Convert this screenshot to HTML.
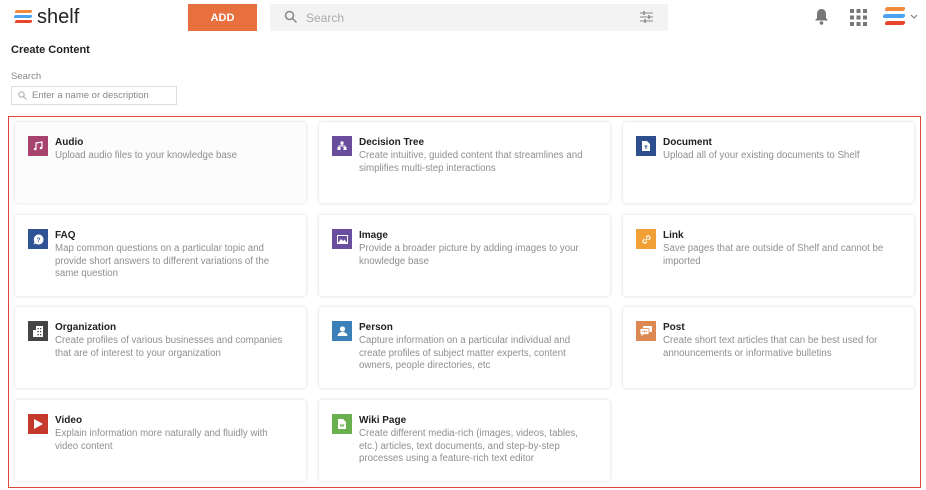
<!DOCTYPE html>
<html><head><meta charset="utf-8"><style>
*{box-sizing:border-box;margin:0;padding:0}
body{width:926px;height:490px;background:#fff;font-family:"Liberation Sans",sans-serif;position:relative;overflow:hidden;color:#222}
.abs{position:absolute}
.card{position:absolute;width:291px;height:81px;background:#fff;border-radius:3px;box-shadow:0 0 3px rgba(0,0,0,.16)}
.card .ic{position:absolute;left:13px;top:14px;width:20px;height:20px;display:flex;align-items:center;justify-content:center}
.card .t{position:absolute;left:40px;top:15px;font-size:10px;font-weight:bold;color:#222}
.card .d{position:absolute;left:40px;top:28px;width:230px;font-size:9.7px;line-height:12.6px;color:#8f8f8f}
</style></head><body>
<div class="abs" style="left:15px;top:10px;width:17px;height:3px;background:#f08a3c;border-radius:2px;transform:skewX(-20deg)"></div>
<div class="abs" style="left:14px;top:15px;width:18px;height:3px;background:#4ea3f0;border-radius:2px;transform:skewX(-20deg)"></div>
<div class="abs" style="left:15px;top:20px;width:17px;height:3px;background:#e8452e;border-radius:2px;transform:skewX(-20deg)"></div>
<div class="abs" style="left:37px;top:6px;font-size:20px;color:#222">shelf</div>
<div class="abs" style="left:188px;top:4px;width:69px;height:27px;background:#e8703e;color:#fff;font-size:11px;font-weight:bold;display:flex;align-items:center;justify-content:center">ADD</div>
<div class="abs" style="left:270px;top:4px;width:398px;height:27px;background:#f3f3f3"></div>
<svg class="abs" style="left:284px;top:10px" width="14" height="14" viewBox="0 0 14 14"><circle cx="5.5" cy="5.5" r="4" fill="none" stroke="#888" stroke-width="1.5"/><path d="M8.5 8.5l4 4" stroke="#888" stroke-width="1.5"/></svg>
<div class="abs" style="left:306px;top:11px;font-size:12px;color:#aaa">Search</div>
<svg class="abs" style="left:640px;top:11px" width="13" height="12" viewBox="0 0 13 12"><path d="M0 2h13M0 6h13M0 10h13" stroke="#888" stroke-width="1"/><path d="M4 0v4M9 4v4M5 8v4" stroke="#888" stroke-width="1.5"/></svg>
<svg class="abs" style="left:814px;top:8px" width="15" height="17" viewBox="0 0 15 17"><path d="M7.5 1c3 0 4.5 2.5 4.5 5v4l2 2.5H1L3 10V6c0-2.5 1.5-5 4.5-5z" fill="#777"/><circle cx="7.5" cy="15" r="1.8" fill="#777"/></svg>
<svg class="abs" style="left:850px;top:9px" width="17" height="17" viewBox="0 0 17 17" fill="#777"><rect x="0" y="0" width="4" height="4"/><rect x="6.5" y="0" width="4" height="4"/><rect x="13" y="0" width="4" height="4"/><rect x="0" y="6.5" width="4" height="4"/><rect x="6.5" y="6.5" width="4" height="4"/><rect x="13" y="6.5" width="4" height="4"/><rect x="0" y="13" width="4" height="4"/><rect x="6.5" y="13" width="4" height="4"/><rect x="13" y="13" width="4" height="4"/></svg>
<div class="abs" style="left:885px;top:7px;width:20px;height:4px;background:#f08a3c;border-radius:2px;transform:skewX(-20deg)"></div>
<div class="abs" style="left:883px;top:14px;width:22px;height:4px;background:#4ea3f0;border-radius:2px;transform:skewX(-20deg)"></div>
<div class="abs" style="left:885px;top:21px;width:20px;height:4px;background:#e8452e;border-radius:2px;transform:skewX(-20deg)"></div>
<svg class="abs" style="left:910px;top:14px" width="8" height="5" viewBox="0 0 8 5"><path d="M1 1l3 3 3-3" stroke="#777" fill="none"/></svg>

<div class="abs" style="left:11px;top:44px;font-size:11px;font-weight:bold;color:#222">Create Content</div>
<div class="abs" style="left:11px;top:71px;font-size:9.5px;color:#888">Search</div>
<div class="abs" style="left:11px;top:86px;width:166px;height:19px;border:1px solid #ddd"></div>
<svg class="abs" style="left:18px;top:91px" width="9" height="9" viewBox="0 0 9 9"><circle cx="3.5" cy="3.5" r="2.7" fill="none" stroke="#aaa"/><path d="M5.5 5.5l3 3" stroke="#aaa"/></svg>
<div class="abs" style="left:32px;top:90px;font-size:9.5px;color:#888">Enter a name or description</div>

<div class="abs" style="left:8px;top:116px;width:913px;height:372px;border:1px solid #e0463a"></div>

<div class="card" style="left:15px;top:122px;background:#fcfcfc"><div class="ic" style="background:#a8426f"><svg width="10" height="10" viewBox="0 0 10 10"><path d="M3 8V2l6-1v6" stroke="#fff" fill="none" stroke-width="1.2"/><circle cx="2.2" cy="8" r="1.3" fill="#fff"/><circle cx="8" cy="7" r="1.3" fill="#fff"/></svg></div><div class="t">Audio</div><div class="d">Upload audio files to your knowledge base</div></div>
<div class="card" style="left:319px;top:122px"><div class="ic" style="background:#6a4c9c"><svg width="10" height="10" viewBox="0 0 10 10" fill="#fff"><rect x="3.5" y="0.5" width="3" height="3"/><rect x="0.5" y="6" width="3" height="3"/><rect x="6.5" y="6" width="3" height="3"/><path d="M5 3v2M2 6V5h6v1" stroke="#fff" fill="none"/></svg></div><div class="t">Decision Tree</div><div class="d">Create intuitive, guided content that streamlines and simplifies multi-step interactions</div></div>
<div class="card" style="left:623px;top:122px"><div class="ic" style="background:#2e4f8e"><svg width="8" height="10" viewBox="0 0 8 10"><path d="M0 0h5l3 3v7H0z" fill="#fff"/><path d="M2.5 5h3M4 5v3" stroke="#2e4f8e"/></svg></div><div class="t">Document</div><div class="d">Upload all of your existing documents to Shelf</div></div>

<div class="card" style="left:15px;top:215px"><div class="ic" style="background:#2f5395"><svg width="11" height="11" viewBox="0 0 11 11"><path d="M5.5 0.5a5 5 0 1 1-3 9L0.5 10.5l1-2.5a5 5 0 0 1 4-7.5z" fill="#fff"/><text x="5.5" y="8" font-size="6" text-anchor="middle" fill="#2f5395" font-weight="bold" font-family="Liberation Sans">?</text></svg></div><div class="t">FAQ</div><div class="d">Map common questions on a particular topic and provide short answers to different variations of the same question</div></div>
<div class="card" style="left:319px;top:215px"><div class="ic" style="background:#6a4fa0"><svg width="11" height="9" viewBox="0 0 11 9"><rect x="0.5" y="0.5" width="10" height="8" fill="none" stroke="#fff"/><path d="M1 8l3-4 2 2 1.5-1.5L10 8z" fill="#fff"/></svg></div><div class="t">Image</div><div class="d">Provide a broader picture by adding images to your knowledge base</div></div>
<div class="card" style="left:623px;top:215px"><div class="ic" style="background:#f0a035"><svg width="11" height="11" viewBox="0 0 11 11"><path d="M4.5 6.5l2-2M3.5 5L2 6.5a2 2 0 0 0 2.5 2.5L6 7.5M7.5 6L9 4.5A2 2 0 0 0 6.5 2L5 3.5" stroke="#fff" fill="none" stroke-width="1.2"/></svg></div><div class="t">Link</div><div class="d">Save pages that are outside of Shelf and cannot be imported</div></div>

<div class="card" style="left:15px;top:307px"><div class="ic" style="background:#444"><svg width="10" height="11" viewBox="0 0 10 11" fill="#fff"><rect x="3" y="0" width="7" height="11"/><rect x="0" y="4" width="3" height="7"/><g fill="#444"><rect x="4.5" y="2" width="1.3" height="1.3"/><rect x="7" y="2" width="1.3" height="1.3"/><rect x="4.5" y="5" width="1.3" height="1.3"/><rect x="7" y="5" width="1.3" height="1.3"/><rect x="4.5" y="8" width="1.3" height="1.3"/><rect x="7" y="8" width="1.3" height="1.3"/></g></svg></div><div class="t">Organization</div><div class="d">Create profiles of various businesses and companies that are of interest to your organization</div></div>
<div class="card" style="left:319px;top:307px"><div class="ic" style="background:#3b80b8"><svg width="11" height="10" viewBox="0 0 11 10" fill="#fff"><circle cx="5.5" cy="3" r="2.6"/><path d="M0.5 10a5 4 0 0 1 10 0z"/></svg></div><div class="t">Person</div><div class="d">Capture information on a particular individual and create profiles of subject matter experts, content owners, people directories, etc</div></div>
<div class="card" style="left:623px;top:307px"><div class="ic" style="background:#dd8752"><svg width="12" height="10" viewBox="0 0 12 10" fill="#fff"><rect x="3" y="0" width="9" height="6" rx="1"/><rect x="0" y="2.5" width="9" height="6" rx="1" stroke="#dd8752" stroke-width="0.8"/><path d="M2 8l-1 2 3-1.5z"/><g fill="#dd8752"><circle cx="2.8" cy="5.5" r=".7"/><circle cx="4.5" cy="5.5" r=".7"/><circle cx="6.2" cy="5.5" r=".7"/></g></svg></div><div class="t">Post</div><div class="d">Create short text articles that can be best used for announcements or informative bulletins</div></div>

<div class="card" style="left:15px;top:400px"><div class="ic" style="background:#c5382c"><svg width="9" height="10" viewBox="0 0 9 10"><path d="M0 0l9 5-9 5z" fill="#fff"/></svg></div><div class="t">Video</div><div class="d">Explain information more naturally and fluidly with video content</div></div>
<div class="card" style="left:319px;top:400px"><div class="ic" style="background:#6ab04f"><svg width="8" height="10" viewBox="0 0 8 10"><path d="M0 0h5l3 3v7H0z" fill="#fff"/><path d="M2 5l1 2.5 1-2 1 2 1-2.5" stroke="#6ab04f" fill="none" stroke-width=".8"/></svg></div><div class="t">Wiki Page</div><div class="d">Create different media-rich (images, videos, tables, etc.) articles, text documents, and step-by-step processes using a feature-rich text editor</div></div>
</body></html>
